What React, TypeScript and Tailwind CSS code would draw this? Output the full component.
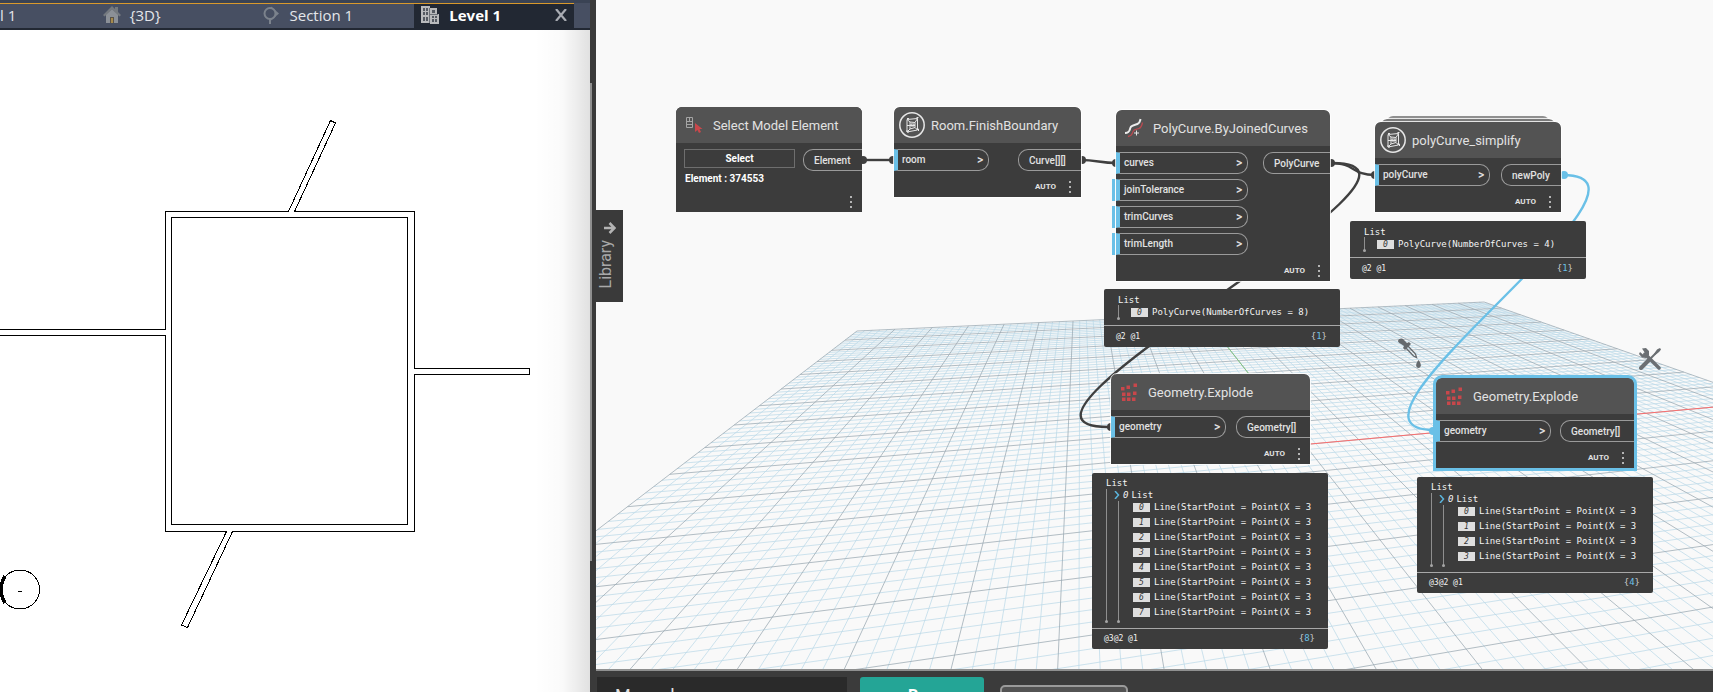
import clsx from "clsx";
import type { ReactNode } from "react";

type Point = [number, number];

const DIVISIONS = 20;
const NEAR = 0.08;
const DEPTH_U = 0.0113;
const DEPTH_V = 0.0507;

// Perspective projection of the ground plane, u along the far edge, v towards the viewer.
function project(u: number, v: number): Point {
  const w = 1 + DEPTH_U * u - DEPTH_V * v;
  return [(856 + 48.113 * u - 54.71 * v) / w - 595, (331 + 1.962 * u - 8.122 * v) / w];
}

function segment(a: Point, b: Point) {
  return `M${a[0].toFixed(1)} ${a[1].toFixed(1)}L${b[0].toFixed(1)} ${b[1].toFixed(1)}`;
}

function gridPath(major: boolean) {
  const parts: string[] = [];
  for (let i = 0; i <= DIVISIONS * 5; i++) {
    if ((i % 5 === 0) !== major) continue;
    const k = i / 5;
    const vEnd = Math.min(DIVISIONS, (1 + DEPTH_U * k - NEAR) / DEPTH_V);
    parts.push(segment(project(k, 0), project(k, vEnd)));
    const uStart = Math.max(0, (NEAR - 1 + DEPTH_V * k) / DEPTH_U);
    parts.push(segment(project(uStart, k), project(DIVISIONS, k)));
  }
  return parts.join("");
}

const MINOR_GRID = gridPath(false);
const MAJOR_GRID = gridPath(true);
const X_AXIS = segment(project(8, 10), project(DIVISIONS, 10));
const Y_AXIS = segment(project(10, 0), project(10, 10));

function HouseIcon() {
  return (
    <svg viewBox="0 0 20 20" className="size-5" aria-hidden="true">
      <path d="M4 9v9h12V9l-6-5z" fill="#8b9097" />
      <path d="M1 10 10 1l3 3V2h3v5l3 3-1.500 1.500L10 4.500l-7.500 7z" fill="#74797f" />
      <path d="M8 12h4v6H8z" fill="#5a5348" />
      <path d="M9 13h2v5H9z" fill="#a58a4d" />
    </svg>
  );
}

function SectionIcon() {
  return (
    <svg viewBox="0 0 18 20" className="h-5 w-[18px]" aria-hidden="true">
      <path d="M8 14v5" stroke="#7b828c" strokeWidth="2" />
      <path d="M9 1.500 17 8.500l-8 7z" fill="#7b828c" />
      <circle cx="8" cy="8.500" r="5.500" fill="#474f62" stroke="#7b828c" strokeWidth="2" />
    </svg>
  );
}

function PlanIcon() {
  return (
    <svg viewBox="0 0 18 18" className="size-[18px]" aria-hidden="true">
      <path d="M0 0h9v2h7v6h2v10H9v-1H0z" fill="#b9babc" />
      <path
        d="M2 2h2v3H2zM5 2h2v3H5zM2 6h2v3H2zM5 6h2v3H5zM2 11h2v4H2zM5 11h2v4H5zM11 4h3v3h-3zM11 10h2v2h-2zM14 10h2v2h-2zM11 13h2v3h-2zM14 13h2v3h-2z"
        fill="#555a62"
      />
      <path d="M8.500 2v15M9 8.500h8" stroke="#6f737a" fill="none" />
    </svg>
  );
}

function TabBar() {
  const tab = "flex h-full items-center gap-2 pb-[2px] text-[15px] text-[#e4e6ea]";
  return (
    <header className="bg-[#3a4354]">
      <div className="h-[3px]" />
      <nav className="flex h-[27px] border-b-2 border-[#222833] bg-[#474f62] font-['Open_Sans',sans-serif]">
        <div className="grid flex-1 grid-cols-[102fr_160fr_153fr_160fr] border-t border-[#d9992b]">
          <button className={tab}>l 1</button>
          <button className={tab}>
            <HouseIcon />
            <span>{"{3D}"}</span>
          </button>
          <button className={tab}>
            <SectionIcon />
            <span className="pl-[2px]">Section 1</span>
          </button>
          <div className="flex items-center bg-[#222833] px-[7px] pb-[2px]">
            <button className="flex flex-1 items-center gap-[10px] text-[15px] font-bold text-white">
              <PlanIcon />
              Level 1
            </button>
            <button aria-label="Close" className="flex size-3">
              <svg viewBox="0 0 12 12" className="size-3" aria-hidden="true">
                <path d="m1 0 10 12M11 0 1 12" stroke="#a9acb3" strokeWidth="2.200" />
              </svg>
            </button>
          </div>
        </div>
        <div className="w-4" />
      </nav>
    </header>
  );
}

function FloorPlan() {
  return (
    <svg className="absolute inset-0 size-full" shapeRendering="crispEdges" role="img" aria-label="Floor plan">
      <g transform="translate(0 -30)" fill="none" stroke="#000" strokeWidth="1">
        <path d="M0 329.500H165.500V211.500H288.500L330.500 120.500 335.500 123 294.500 211.500H414.500V368.500H529.500V374.500H414.500V531.500H232.500L187.500 627.500 181.500 625 226.500 531.500H165.500V335.500H0" />
        <path d="M171.500 217.500H407.500V524.500H171.500z" />
        <circle cx="20" cy="589.500" r="19.500" />
        <path d="M5 576Q-3 589 5 603" strokeWidth="3.500" />
        <path d="M18 591.500h4" />
      </g>
    </svg>
  );
}

function RevitView() {
  return (
    <section className="flex min-w-0">
      <div className="flex min-w-0 flex-1 flex-col">
        <TabBar />
        <div className="relative flex-1 overflow-hidden bg-white">
          <FloorPlan />
          <div className="absolute inset-y-0 right-0 w-14 bg-linear-to-r from-transparent via-black/2 to-black/12" />
        </div>
      </div>
      <div className="relative w-[6px] bg-[#3a3a3a]">
        <span className="absolute top-[12%] bottom-[19%] left-0 w-[2px] bg-[#8f8f8f]" />
      </div>
    </section>
  );
}

function SelectIcon() {
  return (
    <svg viewBox="0 0 26 26" className="size-[26px]" aria-hidden="true">
      <path d="M5.500 5.500h6v10h-6zM5.500 9.500h6M8.500 9.500v-4M5.500 12.500h6" fill="none" stroke="#a5a5a5" />
      <path d="M14 11v9l2.500-2 1.500 3 2-1-1.500-3h3z" fill="#c8474b" />
    </svg>
  );
}

function CustomIcon() {
  return (
    <svg viewBox="0 0 26 26" className="size-[26px]" aria-hidden="true" fill="none" stroke="#e6e6e6">
      <circle cx="13" cy="13" r="12.200" strokeWidth="1.500" />
      <path d="M8 7.500 18.500 6.500V18L8 20zM11 10l5 .5v5l-5 1.500zM8 7.500l3 2.500M18.500 6.500 16 10.500M18.500 18 16 15.500M8 20l3-3M8 13.500h8" strokeWidth="1" />
      <path d="M8 6.500h2M17.500 5.500h2M7 19h2v2M17.500 17h2v2M12 12h3v2h-3z" strokeWidth="1" />
    </svg>
  );
}

function CurveIcon() {
  return (
    <svg viewBox="0 0 26 26" className="size-[26px]" aria-hidden="true" fill="none">
      <path d="M7 21.500C11.500 21 11 19 12 16.500s3.500-2 6-3S21 10 21.500 7.500" stroke="#b84a50" strokeWidth="1.300" />
      <path d="M4 18C9 18 8.500 15 9.500 12.500S14 10 16.500 9 19 6 19.500 4" stroke="#ececec" strokeWidth="2" />
      <path d="M15.500 15.500v5M13 18h5" stroke="#e6e6e6" strokeWidth="1" />
    </svg>
  );
}

function ExplodeIcon() {
  return (
    <svg viewBox="0 0 26 26" className="size-[26px]" aria-hidden="true">
      <path
        d="M5 8h3.500v3.500H5zM10.500 6.500H14V10h-3.500zM17.500 4.500H21V8h-3.500zM6 13.500h3.500V17H6zM11 13.500h3.500V17H11zM17 12.500h3.500V16H17zM6 18.500h3.500V22H6zM11 18.500h3.500V22H11zM16 18.500h3.500V22H16z"
        fill="#c8474b"
      />
    </svg>
  );
}

function Dots() {
  return (
    <button aria-label="Node options" className="flex h-3 w-1 flex-col justify-between">
      <span className="size-[2px] bg-[#b5b5b5]" />
      <span className="size-[2px] bg-[#b5b5b5]" />
      <span className="size-[2px] bg-[#b5b5b5]" />
    </button>
  );
}

function InPort({ label, fallback = false }: { label: string; fallback?: boolean }) {
  return (
    <div className="relative flex h-[22px] items-center justify-between rounded-r-[10px] border border-l-4 border-[#9a9a9a] border-l-[#6ac0e7] pr-px pl-1">
      {fallback && <span className="absolute -left-2 h-[22px] w-[3px] bg-[#6ac0e7]" />}
      <span className="leading-4">{label}</span>
      <span className="w-[10px] text-[12px] leading-4">&gt;</span>
    </div>
  );
}

function OutPort({ label }: { label: string }) {
  return (
    <div className="flex h-[22px] items-center rounded-l-[10px] border border-r-0 border-[#9a9a9a] pl-[10px]">
      {label}
    </div>
  );
}

function GraphNode({
  title,
  icon,
  place,
  inputs = [],
  output,
  outWidth,
  inWidth = "w-[115px]",
  selected = false,
}: {
  title: string;
  icon: ReactNode;
  place: string;
  inputs?: string[];
  output: string;
  outWidth: string;
  inWidth?: string;
  selected?: boolean;
}) {
  return (
    <article
      className={clsx(
        "absolute rounded-t-[6px] bg-[#3c3c3c] text-[10px] font-medium text-[#e2e2e2]",
        selected ? "outline-3 outline-[#6ac0e7]" : "outline outline-white/80",
        place,
      )}
    >
      <h2 className="flex h-9 items-center gap-[6px] rounded-t-[6px] bg-[#535353] pl-[5px] text-[13px] font-normal whitespace-nowrap">
        {icon}
        <span className="pt-px">{title}</span>
      </h2>
      <div className="flex items-start justify-between pt-[6px]">
        <div className={clsx("flex flex-col gap-[5px]", inWidth)}>
          {inputs.map((input, index) => (
            <InPort key={input} label={input} fallback={index > 0} />
          ))}
        </div>
        <div className={outWidth}>
          <OutPort label={output} />
        </div>
      </div>
      <div className="flex h-[26px] items-center justify-end gap-[13px] pt-[6px] pr-2">
        <span className="text-[8px] font-bold">AUTO</span>
        <Dots />
      </div>
    </article>
  );
}

function SelectNode() {
  return (
    <article className="absolute top-[107px] left-[80px] w-[186px] rounded-t-[6px] bg-[#3c3c3c] text-[10px] font-medium text-[#e2e2e2]">
      <h2 className="flex h-9 items-center gap-[6px] rounded-t-[6px] bg-[#535353] pl-[5px] text-[13px] font-normal whitespace-nowrap">
        <SelectIcon />
        <span className="pt-px">Select Model Element</span>
      </h2>
      <div className="flex justify-between pt-[6px] pl-2">
        <button className="h-[19px] w-[111px] border border-[#6e6e6e] text-[10px] leading-4 font-bold text-white">Select</button>
        <div className="w-[59px]">
          <OutPort label="Element" />
        </div>
      </div>
      <p className="pl-[9px] text-[10px] leading-4 font-bold text-white">Element : 374553</p>
      <div className="flex h-[25px] items-center justify-end pt-1 pr-2">
        <Dots />
      </div>
    </article>
  );
}

function Rail({ place }: { place: string }) {
  return (
    <span className={clsx("absolute bottom-[7px] w-px bg-[#8f8f8f]", place)}>
      <span className="absolute -bottom-[2px] -left-px size-[3px] rounded-full bg-[#a5a5a5]" />
    </span>
  );
}

function Preview({
  place,
  items,
  levels,
  nested = false,
}: {
  place: string;
  items: string[];
  levels: string;
  nested?: boolean;
}) {
  return (
    <aside className={clsx("absolute w-[236px] rounded-[2px] bg-[#3c3c3c] font-['DejaVu_Sans_Mono',monospace] text-[9px] text-[#f4f4f4]", place)}>
      <div className={clsx("relative px-[14px]", nested ? "pt-1 pb-[10px]" : "pt-[5px] pb-[7px]")}>
        <Rail place="top-4 left-[14px]" />
        {nested && <Rail place="top-7 left-[26px]" />}
        <p className="leading-3">List</p>
        {nested && (
          <p className="flex items-center gap-[3px] pl-2 leading-3">
            <svg viewBox="0 0 6 8" className="h-2 w-[6px]" aria-hidden="true">
              <path d="m1 0 3.500 4L1 8" fill="none" stroke="#5bb5dd" strokeWidth="1.500" />
            </svg>
            <i>0</i>
            <span>List</span>
          </p>
        )}
        <ul className={clsx("flex flex-col", nested ? "gap-[3px] pl-[27px]" : "pl-[13px]")}>
          {items.map((item, index) => (
            <li key={index} className="flex h-3 items-center gap-1 leading-3 whitespace-nowrap">
              <i className="h-[9px] w-[17px] shrink-0 bg-[#dedede] text-center text-[8px] leading-[9px] text-[#333333]">{index}</i>
              <span>{item}</span>
            </li>
          ))}
        </ul>
      </div>
      <footer className={clsx("flex items-center justify-between border-t border-[#a8a8a8] pr-[13px] pl-3", nested ? "h-[21px]" : "h-[22px]")}>
        <span className="text-[8px]">{levels}</span>
        <span className="text-[#c8c8c8]">
          {"{"}
          <b className="font-normal text-[#6ac0e7]">{items.length}</b>
          {"}"}
        </span>
      </footer>
    </aside>
  );
}

function Scene() {
  return (
    <svg className="absolute inset-0 size-full" aria-hidden="true">
      <g fill="none">
        <path d={MINOR_GRID} stroke="#bcd9e8" strokeOpacity="0.75" />
        <path d={MAJOR_GRID} stroke="#9aa8b1" strokeOpacity="0.75" />
        <path d={X_AXIS} stroke="#fa6e6e" />
        <path d={Y_AXIS} stroke="#83c683" />
      </g>
      <g fill="none" stroke="#3f3f3f" strokeWidth="2.400">
        <path d="M266 160H298" />
        <path d="M485 160C500 160 505 163 520 163" />
        <path d="M734 163C760 163 755 175 779 175" />
        <path d="M736 163C886 163 362 427 512 427" />
      </g>
      <g fill="#3f3f3f">
        <circle cx="267" cy="160" r="4" />
        <circle cx="297" cy="160" r="4" />
        <circle cx="486" cy="160" r="4" />
        <circle cx="520" cy="163" r="4" />
        <circle cx="735" cy="163" r="4" />
        <circle cx="779" cy="175" r="4" />
        <circle cx="515" cy="427" r="4" />
      </g>
      <path d="M967 175C1092 175 713 430 838 430" fill="none" stroke="#6ac0e7" strokeWidth="2.400" />
      <circle cx="968" cy="175" r="4" fill="#6ac0e7" />
      <circle cx="837" cy="431" r="4" fill="#6ac0e7" />
    </svg>
  );
}

function DropperIcon() {
  return (
    <svg viewBox="0 0 24 30" className="absolute top-[338px] left-[801px] h-[30px] w-6" aria-hidden="true">
      <path d="M1 3c1-3 4-3 6-1l3 3 2-1 2 2-6 6-2-2 1-2-3-2C2 5 1 4 1 3z" fill="#65696d" />
      <path d="m8.500 9.500 8 8.500 3 1.500-1-3.500-8-8.500" fill="none" stroke="#65696d" strokeWidth="1.300" />
      <path d="M21.500 22c4 5 2 8 0 8s-4-3 0-8z" fill="#65696d" />
    </svg>
  );
}

function ToolsIcon() {
  return (
    <svg viewBox="0 0 22 22" className="absolute top-[348px] left-[1043px] size-[22px]" aria-hidden="true">
      <path d="M20.500 1.500 11 11" stroke="#6b6f73" strokeWidth="2" fill="none" />
      <path d="M18 1.500 21 0l1 1.500L20 4l-4 3-1-1z" fill="#6b6f73" />
      <path d="M9.500 12.500 2 20" stroke="#6b6f73" strokeWidth="4" strokeLinecap="round" />
      <path d="m6 6 14 14" stroke="#6b6f73" strokeWidth="3.500" strokeLinecap="round" />
      <path d="M3 .5 7 0l3 3v4L7 10 3 9.500 0 6l1-2 3 2.500L6 5z" fill="#6b6f73" />
    </svg>
  );
}

function DynamoCanvas() {
  return (
    <main className="relative flex-1 overflow-hidden bg-[#f9f9f9] font-[Roboto,sans-serif]">
      <Scene />
      <button className="absolute top-[210px] left-0 flex h-[92px] w-[27px] flex-col items-center gap-[6px] bg-[#3a3a3a] pt-3 text-[16px] text-[#a9a9a9]">
        <svg viewBox="0 0 12 12" className="size-3 shrink-0" aria-hidden="true">
          <path d="M0 6h10M5.500 1l5 5-5 5" fill="none" stroke="#b4b4b4" strokeWidth="2.500" />
        </svg>
        <span className="rotate-180 self-start leading-5 [writing-mode:vertical-rl]">Library</span>
      </button>

      <SelectNode />
      <GraphNode
        title="Room.FinishBoundary"
        icon={<CustomIcon />}
        place="left-[298px] top-[107px] w-[187px]"
        inputs={["room"]}
        inWidth="w-[95px]"
        output="Curve[][]"
        outWidth="w-[63px]"
      />
      <GraphNode
        title="PolyCurve.ByJoinedCurves"
        icon={<CurveIcon />}
        place="left-[520px] top-[110px] w-[214px]"
        inputs={["curves", "joinTolerance", "trimCurves", "trimLength"]}
        inWidth="w-[132px]"
        output="PolyCurve"
        outWidth="w-[67px]"
      />
      <div className="absolute top-[116px] left-[791px] h-3 w-[162px] rounded-t-[6px] bg-[#909090]" />
      <div className="absolute top-[119px] left-[785px] h-3 w-[174px] rounded-t-[6px] bg-[#7a7a7a] outline outline-white/80" />
      <GraphNode
        title="polyCurve_simplify"
        icon={<CustomIcon />}
        place="left-[779px] top-[122px] w-[186px]"
        inputs={["polyCurve"]}
        output="newPoly"
        outWidth="w-[60px]"
      />
      <GraphNode
        title="Geometry.Explode"
        icon={<ExplodeIcon />}
        place="left-[515px] top-[374px] w-[199px]"
        inputs={["geometry"]}
        output="Geometry[]"
        outWidth="w-[74px]"
      />
      <GraphNode
        title="Geometry.Explode"
        icon={<ExplodeIcon />}
        place="left-[840px] top-[378px] w-[198px]"
        inputs={["geometry"]}
        output="Geometry[]"
        outWidth="w-[74px]"
        selected
      />

      <Preview place="left-[508px] top-[289px]" items={["PolyCurve(NumberOfCurves = 8)"]} levels="@2 @1" />
      <Preview place="left-[754px] top-[221px]" items={["PolyCurve(NumberOfCurves = 4)"]} levels="@2 @1" />
      <Preview
        place="left-[496px] top-[473px]"
        items={Array.from({ length: 8 }, () => "Line(StartPoint = Point(X = 3")}
        levels="@3@2 @1"
        nested
      />
      <Preview
        place="left-[821px] top-[477px]"
        items={Array.from({ length: 4 }, () => "Line(StartPoint = Point(X = 3")}
        levels="@3@2 @1"
        nested
      />
      <DropperIcon />
      <ToolsIcon />
    </main>
  );
}

function RunBar() {
  return (
    <footer className="flex h-[23px] items-start overflow-hidden border-t-2 border-[#8f9090] bg-[#3b3b3b] pt-[6px] pl-px font-[Roboto,sans-serif] leading-5 text-[#e0e0e0]">
      <button className="h-10 w-[250px] bg-[#2a2a2a] pb-[2px] pl-[18px] text-left text-[18px]">Manual</button>
      <button className="ml-[13px] h-10 w-[124px] rounded-[3px] bg-[#24a596] pb-[2px] text-[16px] font-bold text-white">Run</button>
      <button aria-label="Cancel" className="mt-2 ml-4 h-10 w-[128px] rounded-[5px] border-2 border-[#9a9a9a] bg-[#535353]" />
    </footer>
  );
}

export default function App() {
  return (
    <div className="grid h-screen grid-cols-[596fr_1117fr] overflow-hidden">
      <RevitView />
      <div className="flex min-w-0 flex-col">
        <DynamoCanvas />
        <RunBar />
      </div>
    </div>
  );
}
